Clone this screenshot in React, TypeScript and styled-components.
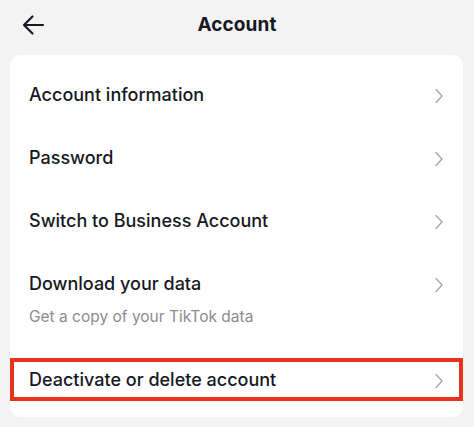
import styled, { createGlobalStyle } from "styled-components";

const Global = createGlobalStyle`
  html, body {
    margin: 0;
    padding: 0;
    background: #f3f3f4;
    font-family: "Inter", "Liberation Sans", sans-serif;
    color: #161823;
  }
`;

const Page = styled.div`
  width: 474px;
  height: 427px;
  background: #f3f3f4;
  overflow: hidden;
`;

const Header = styled.div`
  height: 48px;
  display: grid;
  grid-template-columns: 60px 1fr 60px;
  align-items: center;
`;

const BackButton = styled.div`
  display: flex;
  align-items: center;
  padding-left: 21px;
  padding-top: 2px;
`;

const Title = styled.h1`
  margin: 0;
  text-align: center;
  font-size: 19px;
  font-weight: 700;
  letter-spacing: 0.1px;
  color: #161823;
`;

const Card = styled.div`
  margin: 7px 11px 0 10px;
  background: #fff;
  border-radius: 10px;
  padding: 8px 0 16px;
`;

const Row = styled.div<{ $highlight?: boolean; $tall?: boolean }>`
  display: flex;
  align-items: ${(p) => (p.$tall ? "flex-start" : "center")};
  justify-content: space-between;
  padding: ${(p) => (p.$highlight ? "6px 15px 6px 15px" : p.$tall ? "20px 19px 31px 19px" : "20px 19px 20px 19px")};
  border: ${(p) => (p.$highlight ? "4px solid #e8331c" : "none")};
`;

const Texts = styled.div`
  display: flex;
  flex-direction: column;
`;

const Label = styled.span`
  font-size: 18px;
  font-weight: 500;
  line-height: 23px;
  color: #161823;
`;

const Sub = styled.span`
  margin-top: 12px;
  font-size: 15.5px;
  line-height: 20px;
  color: #8a8b91;
`;

const ChevronBox = styled.div`
  box-sizing: border-box;
  display: flex;
  align-items: center;
  height: 23px;
  padding-top: 3px;
`;

const Chevron = () => (
  <svg width="10" height="16" viewBox="0 0 10 16">
    <polyline points="2,1.5 8,8 2,14.5" fill="none" stroke="#a6a7ab" strokeWidth="1.4" strokeLinecap="round" strokeLinejoin="round" />
  </svg>
);

const items: { label: string; sub?: string; highlight?: boolean }[] = [
  { label: "Account information" },
  { label: "Password" },
  { label: "Switch to Business Account" },
  { label: "Download your data", sub: "Get a copy of your TikTok data" },
  { label: "Deactivate or delete account", highlight: true },
];

export default function App() {
  return (
    <Page>
      <Global />
      <Header>
        <BackButton>
          <svg width="24" height="22" viewBox="0 0 24 22">
            <path d="M22 11H3M11.5 2.5L3 11l8.5 8.5" fill="none" stroke="#161823" strokeWidth="2.2" strokeLinecap="round" strokeLinejoin="round" />
          </svg>
        </BackButton>
        <Title>Account</Title>
        <div />
      </Header>
      <Card>
        {items.map((it) => (
          <Row key={it.label} $highlight={it.highlight} $tall={!!it.sub}>
            <Texts>
              <Label>{it.label}</Label>
              {it.sub && <Sub>{it.sub}</Sub>}
            </Texts>
            <ChevronBox>
              <Chevron />
            </ChevronBox>
          </Row>
        ))}
      </Card>
    </Page>
  );
}
